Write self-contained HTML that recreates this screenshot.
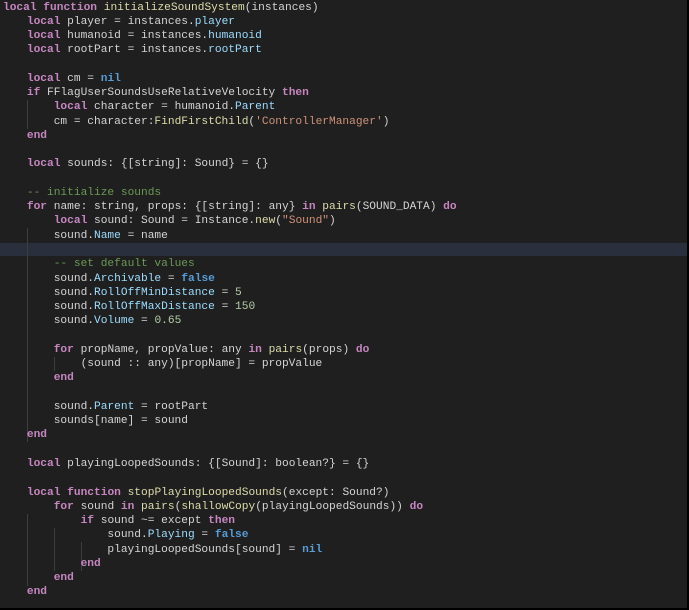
<!DOCTYPE html>
<html><head><meta charset="utf-8"><style>
html,body{margin:0;padding:0;background:#000;}
#ed{position:absolute;left:0;top:0;width:687px;height:608px;background:#1f1f1f;overflow:hidden;}
pre{position:absolute;left:0;top:0.5px;margin:0;font-family:"Liberation Mono",monospace;font-size:11.2px;line-height:14.27px;color:#d4d4d4;white-space:pre;}
.hl{position:absolute;left:0;width:687px;top:243px;height:13px;background:#2a2f3d;}
.g{position:absolute;width:1px;background:#3e3e3e;}
.k{color:#c586c0;font-weight:bold}
.b{color:#569cd6;font-weight:bold}
.p{color:#9cdcfe}
.f{color:#dcdcaa}
.c{color:#6a9955}
.n{color:#b5cea8}
.s{color:#ce9178}
.o{display:inline-block;width:3px}
</style></head><body><div id="ed">
<div class="hl"></div>
<div class="g" style="left:27px;top:100px;height:29px"></div>
<div class="g" style="left:27px;top:228px;height:214px"></div>
<div class="g" style="left:54px;top:357px;height:14px"></div>
<div class="g" style="left:27px;top:514px;height:72px"></div>
<div class="g" style="left:54px;top:528px;height:43px"></div>
<div class="g" style="left:81px;top:542px;height:29px"></div>
<pre><span class="o"></span><span class="k">local</span> <span class="k">function</span> <span class="f">initializeSoundSystem</span>(instances)
    <span class="k">local</span> player = instances.<span class="p">player</span>
    <span class="k">local</span> humanoid = instances.<span class="p">humanoid</span>
    <span class="k">local</span> rootPart = instances.<span class="p">rootPart</span>

    <span class="k">local</span> cm = <span class="b">nil</span>
    <span class="k">if</span> FFlagUserSoundsUseRelativeVelocity <span class="k">then</span>
        <span class="k">local</span> character = humanoid.<span class="p">Parent</span>
        cm = character:<span class="f">FindFirstChild</span>(<span class="s">'ControllerManager'</span>)
    <span class="k">end</span>

    <span class="k">local</span> sounds: {[string]: Sound} = {}

    <span class="c">-- initialize sounds</span>
    <span class="k">for</span> name: string, props: {[string]: any} <span class="k">in</span> <span class="f">pairs</span>(SOUND_DATA) <span class="k">do</span>
        <span class="k">local</span> sound: Sound = Instance.<span class="f">new</span>(<span class="s">"Sound"</span>)
        sound.<span class="p">Name</span> = name

        <span class="c">-- set default values</span>
        sound.<span class="p">Archivable</span> = <span class="b">false</span>
        sound.<span class="p">RollOffMinDistance</span> = <span class="n">5</span>
        sound.<span class="p">RollOffMaxDistance</span> = <span class="n">150</span>
        sound.<span class="p">Volume</span> = <span class="n">0.65</span>

        <span class="k">for</span> propName, propValue: any <span class="k">in</span> <span class="f">pairs</span>(props) <span class="k">do</span>
            (sound :: any)[propName] = propValue
        <span class="k">end</span>

        sound.<span class="p">Parent</span> = rootPart
        sounds[name] = sound
    <span class="k">end</span>

    <span class="k">local</span> playingLoopedSounds: {[Sound]: boolean?} = {}

    <span class="k">local</span> <span class="k">function</span> <span class="f">stopPlayingLoopedSounds</span>(except: Sound?)
        <span class="k">for</span> sound <span class="k">in</span> <span class="f">pairs</span>(<span class="f">shallowCopy</span>(playingLoopedSounds)) <span class="k">do</span>
            <span class="k">if</span> sound ~= except <span class="k">then</span>
                sound.<span class="p">Playing</span> = <span class="b">false</span>
                playingLoopedSounds[sound] = <span class="b">nil</span>
            <span class="k">end</span>
        <span class="k">end</span>
    <span class="k">end</span></pre>
</div></body></html>
